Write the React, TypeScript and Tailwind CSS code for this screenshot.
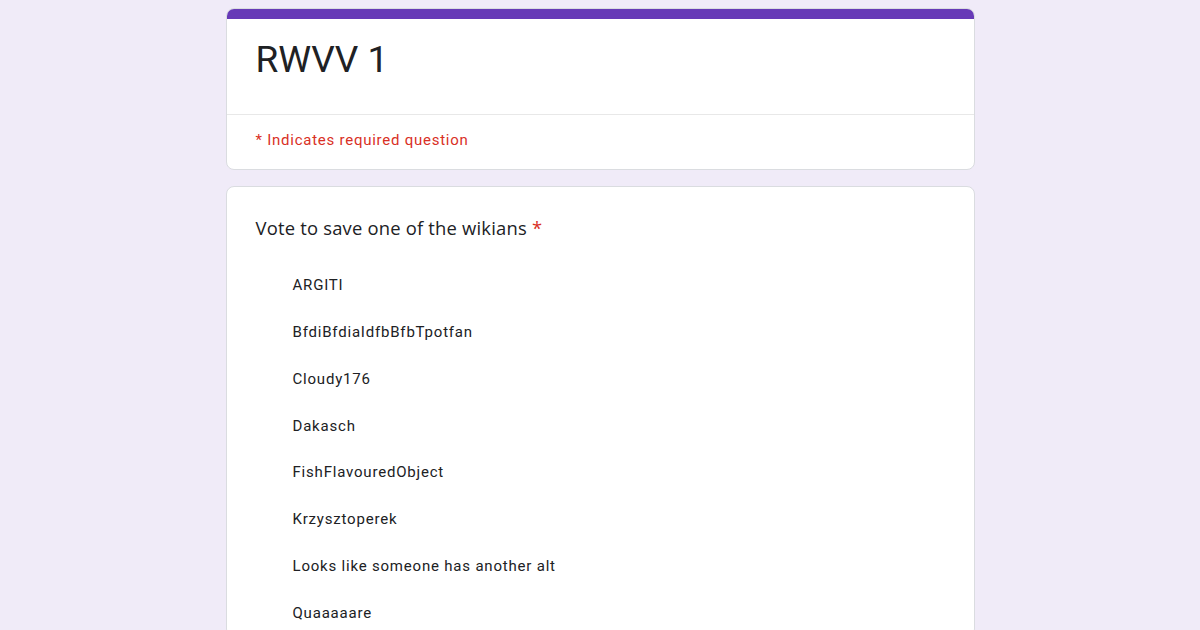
const options = [
  "ARGITI",
  "BfdiBfdiaIdfbBfbTpotfan",
  "Cloudy176",
  "Dakasch",
  "FishFlavouredObject",
  "Krzysztoperek",
  "Looks like someone has another alt",
  "Quaaaaare",
];

export default function App() {
  return (
    <div className="h-[630px] w-[1200px] overflow-hidden bg-[#f0ebf8] pt-2 font-['Roboto',sans-serif] text-[#202124]">
      <div className="mx-auto flex w-[749px] flex-col gap-4">
        <div className="overflow-hidden rounded-lg border border-[#dadce0] bg-white">
          <div className="h-[10px] bg-[#673ab7]" />
          <div className="border-b border-[#e8e8e8] px-[29px] pt-[17px] pb-[30px]">
            <h1 className="text-[37px] leading-[48px] font-normal">RWVV 1</h1>
          </div>
          <div className="px-[29px] pt-[15px] pb-[19px] text-[15px] leading-5 tracking-[0.75px] text-[#d93025]">
            * Indicates required question
          </div>
        </div>

        <div className="rounded-lg border border-[#dadce0] bg-white px-[29px] pt-[29px]">
          <div className="font-['Open_Sans',sans-serif] text-[18.4px] leading-6 tracking-[0.2px]">
            Vote to save one of the wikians <span className="text-[#d93025]">*</span>
          </div>
          <ul className="mt-[22px] flex flex-col pl-[37px]">
            {options.map((o) => (
              <li key={o} className="flex h-[46.8px] items-center text-[15px] tracking-[0.8px]">
                {o}
              </li>
            ))}
          </ul>
        </div>
      </div>
    </div>
  );
}
